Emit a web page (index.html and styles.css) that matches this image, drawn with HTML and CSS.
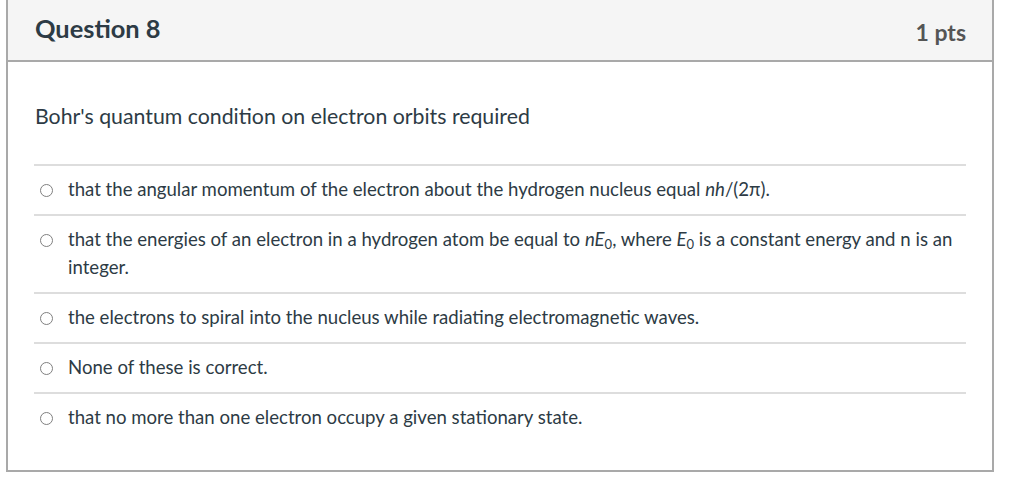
FILE: index.html
```html
<!DOCTYPE html>
<html lang="en">
<head>
<meta charset="utf-8">
<title>Question 8</title>
<link rel="stylesheet" href="styles.css">
</head>
<body>
<div class="quiz">
  <div class="header">
    <span class="title">Question 8</span>
    <span class="pts">1 pts</span>
  </div>
  <div class="content">
    <p class="question">Bohr's quantum condition on electron orbits required</p>
    <div class="answers">
      <div class="answer"><span class="radio"></span><span class="label">that the angular momentum of the electron about the hydrogen nucleus equal <i>nh</i>/(2π).</span></div>
      <div class="answer"><span class="radio"></span><span class="label">that the energies of an electron in a hydrogen atom be equal to <i>nE</i><sub>0</sub>, where <i>E</i><sub>0</sub> is a constant energy and n is an integer.</span></div>
      <div class="answer"><span class="radio"></span><span class="label">the electrons to spiral into the nucleus while radiating electromagnetic waves.</span></div>
      <div class="answer"><span class="radio"></span><span class="label">None of these is correct.</span></div>
      <div class="answer"><span class="radio"></span><span class="label">that no more than one electron occupy a given stationary state.</span></div>
    </div>
  </div>
</div>
</body>
</html>
```
FILE: styles.css
```css
html, body {
  margin: 0;
  padding: 0;
  background: #ffffff;
}
body {
  font-family: Lato, "Open Sans", sans-serif;
  color: #2d3b45;
}
.quiz {
  margin-left: 6px;
  width: 988px;
  box-sizing: border-box;
  border: 2px solid #a9a9a9;
  border-top: none;
}
.header {
  height: 60px;
  background: #f5f5f5;
  border-bottom: 2px solid #a9a9a9;
  display: flex;
  justify-content: space-between;
  align-items: baseline;
  padding: 0 26px 0 27px;
  box-sizing: content-box;
}
.title {
  font-weight: bold;
  font-size: 25.4px;
  line-height: 60px;
  color: #2d3b45;
  position: relative;
  top: -2px;
}
.pts {
  font-weight: bold;
  font-size: 23px;
  line-height: 60px;
  color: #555555;
  position: relative;
  top: 1px;
}
.content {
  padding: 40px 26px 28px 27px;
}
.question {
  margin: 0 0 34px 0;
  font-size: 21.3px;
  line-height: 28px;
}
.answers {
  margin-left: -1px;
}
.answer {
  display: flex;
  align-items: flex-start;
  border-top: 2px solid #dddddd;
  padding: 9px 0 11px 6px;
  font-size: 18.6px;
  line-height: 28px;
}
.radio {
  flex: none;
  width: 11px;
  height: 11px;
  border: 1px solid #808080;
  border-radius: 50%;
  margin-top: 9px;
  margin-right: 15px;
}
.label sub {
  font-size: 13px;
  line-height: 0;
  vertical-align: -3px;
}
```
